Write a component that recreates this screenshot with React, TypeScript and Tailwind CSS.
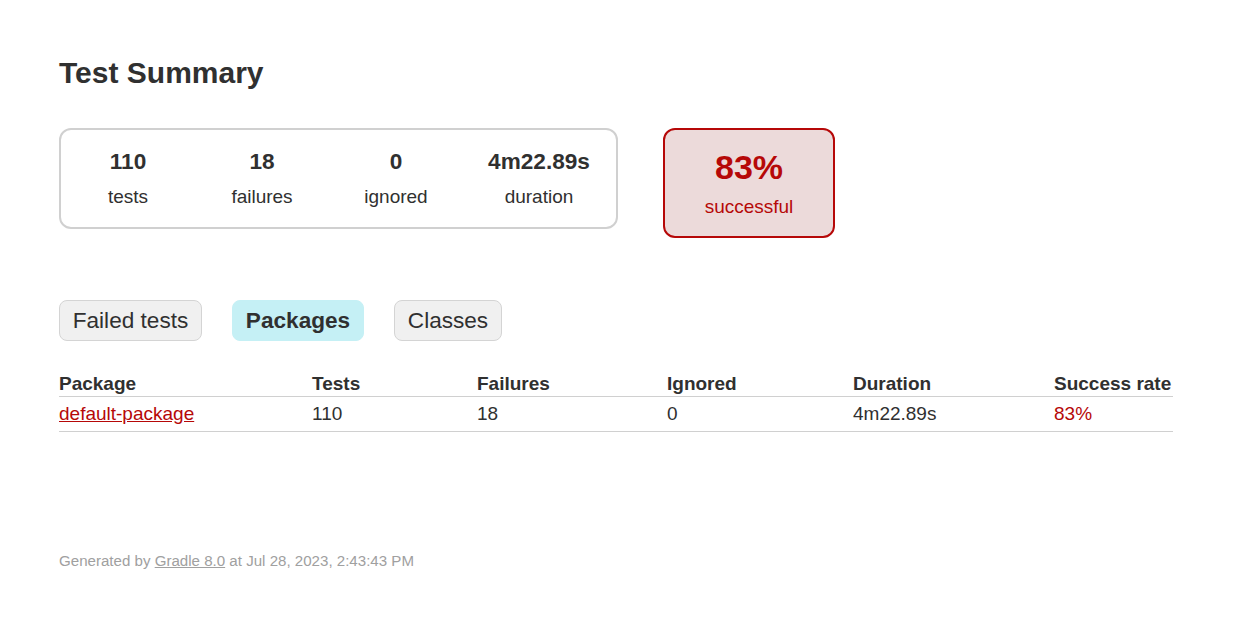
import React from "react";

const counters = [
  { v: "110", l: "tests", w: "w-[134px]" },
  { v: "18", l: "failures", w: "w-[134px]" },
  { v: "0", l: "ignored", w: "w-[134px]" },
  { v: "4m22.89s", l: "duration", w: "w-[152px]" },
];

const cols = ["w-[253px]", "w-[165px]", "w-[190px]", "w-[186px]", "w-[201px]", "w-[119px]"];

export default function App() {
  return (
    <div
      className="min-h-[637px] bg-white pl-[59px] text-[#303030]"
      style={{ fontFamily: '"Liberation Sans", Arial, sans-serif' }}
    >
      <div className="h-[56px]" />
      <h1 className="m-0 whitespace-nowrap text-[30px] font-bold leading-[34px]">Test Summary</h1>

      <div className="mt-[38px] flex items-start gap-[45px]">
        <div className="flex h-[101px] w-[559px] rounded-[12px] border-2 border-[#d0d0d0]">
          {counters.map((c) => (
            <div key={c.l} className={`${c.w} flex flex-col items-center pt-[19px] text-center`}>
              <div className="text-[22.6px] font-bold leading-[26px]">{c.v}</div>
              <div className="mt-[11px] text-[19px] leading-[22px]">{c.l}</div>
            </div>
          ))}
        </div>
        <div className="flex h-[110px] w-[172px] flex-col items-center rounded-[12px] border-2 border-[#b60808] bg-[#ecdada] pt-[18px] text-center text-[#b60808]">
          <div className="text-[34px] font-bold leading-[39px]">83%</div>
          <div className="mt-[9px] text-[19px] leading-[22px]">successful</div>
        </div>
      </div>

      <div className="mt-[62px] flex gap-[30px] text-[22.6px] leading-[26px]">
        <div className="flex h-[41px] w-[143px] items-center justify-center rounded-[8px] border border-[#d4d4d4] bg-[#f0f0f0]">
          Failed tests
        </div>
        <div className="flex h-[41px] w-[132px] items-center justify-center rounded-[8px] border border-[#c5f0f5] bg-[#c5f0f5] font-bold">
          Packages
        </div>
        <div className="flex h-[41px] w-[108px] items-center justify-center rounded-[8px] border border-[#d4d4d4] bg-[#f0f0f0]">
          Classes
        </div>
      </div>

      <div className="mt-[31px] w-[1114px] text-[19px] leading-[22px]">
        <div className="flex border-b border-[#d0d0d0] py-[1px] font-bold">
          {["Package", "Tests", "Failures", "Ignored", "Duration", "Success rate"].map((h, i) => (
            <div key={h} className={`${cols[i]} whitespace-nowrap`}>
              {h}
            </div>
          ))}
        </div>
        <div className="flex border-b border-[#d0d0d0] py-[6px]">
          <div className={cols[0]}>
            <a href="#" className="text-[#b60808] underline">
              default-package
            </a>
          </div>
          <div className={cols[1]}>110</div>
          <div className={cols[2]}>18</div>
          <div className={cols[3]}>0</div>
          <div className={cols[4]}>4m22.89s</div>
          <div className={`${cols[5]} text-[#b60808]`}>83%</div>
        </div>
      </div>

      <div className="mt-[120px] whitespace-nowrap text-[15.1px] leading-[17px] text-[#a0a0a0]">
        Generated by{" "}
        <a href="#" className="text-[#a0a0a0] underline">
          Gradle 8.0
        </a>{" "}
        at Jul 28, 2023, 2:43:43 PM
      </div>
    </div>
  );
}
